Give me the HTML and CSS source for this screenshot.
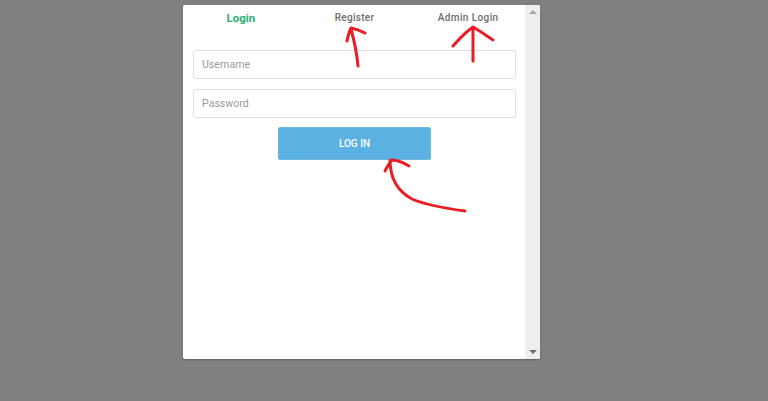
FILE: index.html
```html
<!DOCTYPE html>
<html lang="en">
<head>
<meta charset="utf-8">
<title>Login</title>
<link rel="stylesheet" href="styles.css">
</head>
<body>
<main class="panel">
  <div class="content">
    <nav class="tabs">
      <a class="tab tab-active">Login</a>
      <a class="tab">Register</a>
      <a class="tab tab-wide">Admin Login</a>
    </nav>
    <form class="form">
      <input class="field" type="text" placeholder="Username">
      <input class="field" type="password" placeholder="Password">
      <button class="submit" type="button">LOG IN</button>
    </form>
  </div>
  <div class="scrollbar">
    <span class="arrow-up"></span>
    <span class="arrow-down"></span>
  </div>
</main>
<svg class="marks" width="768" height="401" viewBox="0 0 768 401" fill="none">
  <path d="M358 66C357 54 354 40 351 29M347 41C348 36 349 32 351 28C356 29 361 31 365 33"/>
  <path d="M473 61V29M453 46C459 39 466 32 473 27C480 31 487 36 493 40"/>
  <path d="M465 211C450 209 428 206 412 199C399 192 390 180 390 160M385 171C387 167 389 163 392 160C398 160 404 163 409 166"/>
</svg>
</body>
</html>
```
FILE: styles.css
```css
html, body {
  margin: 0;
  height: 100%;
}
body {
  background: #808080;
  font-family: Roboto, "Liberation Sans", sans-serif;
  overflow: hidden;
  padding: 5px 0 0 183px;
  box-sizing: border-box;
}
.panel {
  width: 357px;
  height: 354px;
  background: #fff;
  display: flex;
  border-radius: 2px;
  box-shadow: 0 1px 2px rgba(0, 0, 0, 0.25);
  overflow: hidden;
}
.content {
  flex: 1;
  min-width: 0;
}
.tabs {
  display: grid;
  grid-template-columns: repeat(3, 1fr);
  padding: 6px 0 0 1px;
}
.tab {
  text-align: center;
  font-size: 10px;
  line-height: 14px;
  font-weight: 500;
  letter-spacing: 0.3px;
  color: #6d6d6d;
}
.tab-wide {
  letter-spacing: 0.4px;
}
.tab-active {
  color: #2bae74;
  font-size: 11.5px;
  font-weight: 700;
  letter-spacing: 0;
}
.form {
  display: flex;
  flex-direction: column;
  padding: 25px 9px 0 10px;
}
.field {
  height: 29px;
  box-sizing: border-box;
  border: 1px solid #e0e0e0;
  border-radius: 3px;
  padding: 0 8px;
  margin-bottom: 10px;
  font: 10.6px Roboto, "Liberation Sans", sans-serif;
  background: #fff;
}
.field::placeholder {
  color: #9a9a9a;
  opacity: 1;
}
.submit {
  align-self: center;
  width: 153px;
  height: 33px;
  margin-top: -1px;
  border: 1px solid #6bb9e4;
  border-radius: 2px;
  background: #5bb1e1;
  color: #fff;
  font: 500 10px Roboto, "Liberation Sans", sans-serif;
}
.scrollbar {
  width: 15px;
  background: #efefef;
  display: flex;
  flex-direction: column;
  justify-content: space-between;
  align-items: center;
  padding: 5px 0;
  box-sizing: border-box;
}
.arrow-up, .arrow-down {
  width: 0;
  height: 0;
  border-left: 4px solid transparent;
  border-right: 4px solid transparent;
}
.arrow-up {
  border-bottom: 4px solid #a3a3a3;
}
.arrow-down {
  border-top: 4px solid #6f6f6f;
}
.marks {
  position: absolute;
  left: 0;
  top: 0;
  pointer-events: none;
}
.marks path {
  stroke: #ea1c24;
  stroke-width: 3;
  stroke-linecap: round;
  stroke-linejoin: round;
}
```
